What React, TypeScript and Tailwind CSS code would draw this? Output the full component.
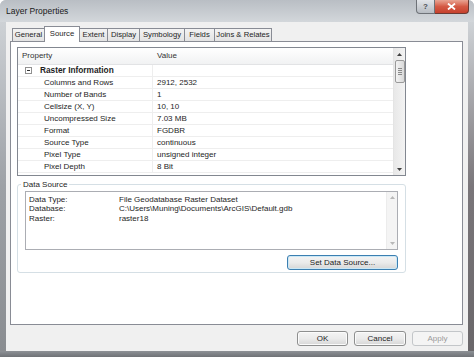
import React from "react"

const rows: [string, string][] = [
  ["Columns and Rows", "2912, 2532"],
  ["Number of Bands", "1"],
  ["Cellsize (X, Y)", "10, 10"],
  ["Uncompressed Size", "7.03 MB"],
  ["Format", "FGDBR"],
  ["Source Type", "continuous"],
  ["Pixel Type", "unsigned integer"],
  ["Pixel Depth", "8 Bit"],
]

const tabs = [
  { label: "General", w: "w-[33px]" },
  { label: "Source", w: "w-[36px]", active: true },
  { label: "Extent", w: "w-[29px]" },
  { label: "Display", w: "w-[33px]" },
  { label: "Symbology", w: "w-[46px]" },
  { label: "Fields", w: "w-[31px]" },
  { label: "Joins & Relates", w: "w-[58px]" },
]

function Arrow({ up, disabled }: { up?: boolean; disabled?: boolean }) {
  return (
    <svg width="5" height="3" viewBox="0 0 5 3">
      <path d={up ? "M0 3 L2.5 0 L5 3 Z" : "M0 0 L2.5 3 L5 0 Z"} fill={disabled ? "#b8b8b8" : "#404040"} />
    </svg>
  )
}

function WinButton({ label, w, focused, disabled }: { label: string; w: string; focused?: boolean; disabled?: boolean }) {
  const base = "h-[15px] rounded-[3px] border flex items-center justify-center text-[8px]"
  if (disabled) {
    return <div className={`${base} ${w} border-[#c3c6c9] bg-[#f4f4f4] text-[#9a9a9a]`}>{label}</div>
  }
  return (
    <div
      className={`${base} ${w} ${
        focused ? "border-[#3c7fb1] shadow-[inset_0_0_0_1px_#cbe8f6]" : "border-[#8e8f8f] shadow-[inset_0_0_0_1px_#fbfbfb]"
      } bg-gradient-to-b from-[#f4f4f4] via-[#ebebeb] to-[#d6d6d6] text-[#1e1e1e]`}
    >
      {label}
    </div>
  )
}

export default function App() {
  return (
    <div className="w-[474px] h-[357px] overflow-hidden flex flex-col bg-gradient-to-b from-[#c3c8cd] via-[#b3b8bd] to-[#8f9398] font-['Liberation_Sans',Arial,sans-serif] text-[#1e1e1e] rounded-t-[6px]">
      {/* Title bar */}
      <div className="h-[22px] flex items-start bg-gradient-to-b from-[#b9bec4] to-[#d3d7db]">
        <div className="pl-[6px] pt-[5px] text-[8.5px] text-[#1a1a1a]">Layer Properties</div>
        <div className="ml-auto mr-[5px] flex">
          <div className="w-[19px] h-[14px] rounded-bl-[4px] border border-t-0 border-[#6e7278] bg-gradient-to-b from-[#e2e5e9] to-[#b7bcc2] flex items-center justify-center text-[8px] text-[#4a4f55] font-bold">
            ?
          </div>
          <div className="w-[34px] h-[14px] rounded-br-[4px] border border-t-0 border-l-0 border-[#6b3a33] bg-gradient-to-b from-[#e8a493] via-[#d45a45] to-[#c6402c] flex items-center justify-center">
            <svg width="9" height="7" viewBox="0 0 9 7">
              <path d="M1 0.5 L8 6.5 M8 0.5 L1 6.5" stroke="#ffffff" strokeWidth="1.8" />
            </svg>
          </div>
        </div>
      </div>

      <div className="flex h-[329px]">
        <div className="w-[6px] bg-gradient-to-b from-[#cdd1d5] via-[#9da1a6] to-[#8a8d91]" />
        {/* Client area */}
        <div className="w-[462px] bg-[#f0f0f0] flex flex-col pt-[4px] pl-[4px] pr-[5px]">
          {/* Tabs */}
          <div className="h-[15px] flex items-end pl-[2px]">
            {tabs.map((t) =>
              t.active ? (
                <div
                  key={t.label}
                  className={`${t.w} h-[16px] -mb-px -ml-px relative z-10 bg-white border border-b-0 border-[#898c95] flex items-center justify-center text-[7.7px] pb-[1px]`}
                >
                  {t.label}
                </div>
              ) : (
                <div
                  key={t.label}
                  className={`${t.w} h-[13px] -ml-px first:ml-0 border border-b-0 border-[#898c95] bg-gradient-to-b from-[#f3f3f3] to-[#e3e3e3] flex items-center justify-center text-[7.7px]`}
                >
                  {t.label}
                </div>
              )
            )}
          </div>

          {/* Tab panel */}
          <div className="w-[453px] h-[284px] border border-[#898c95] bg-white flex flex-col pl-[6px] pt-[5px]">
            {/* Property grid */}
            <div className="w-[389px] h-[129px] border border-[#828790] flex overflow-hidden">
              <div className="flex-1 flex flex-col">
                <div className="h-[17px] flex items-center border-b border-[#e2e3e5] bg-gradient-to-b from-[#ffffff] to-[#f1f2f3] text-[8px] text-[#333]">
                  <div className="w-[135px] pl-[4px]">Property</div>
                  <div className="pl-[4px]">Value</div>
                </div>
                <div className="h-[12px] flex items-center border-b border-[#eeeeee]">
                  <div className="w-[135px] h-full flex items-center pl-[7px] border-r border-[#eeeeee]">
                    <div className="w-[7px] h-[7px] border border-[#919191] flex items-center justify-center">
                      <div className="w-[3px] h-px bg-[#333]" />
                    </div>
                    <span className="ml-[8px] text-[8.3px] font-bold">Raster Information</span>
                  </div>
                </div>
                {rows.map(([k, v]) => (
                  <div key={k} className="h-[12px] flex items-center border-b border-[#eeeeee] text-[8px]">
                    <div className="w-[135px] h-full flex items-center pl-[26px] border-r border-[#eeeeee]">{k}</div>
                    <div className="pl-[4px]">{v}</div>
                  </div>
                ))}
              </div>
              {/* Scrollbar */}
              <div className="w-[12px] bg-gradient-to-r from-[#e8e8e8] to-[#f3f3f3] border-l border-[#e4e4e4] flex flex-col items-center">
                <div className="h-[12px] flex items-center justify-center">
                  <Arrow up />
                </div>
                <div className="w-[10px] h-[23px] rounded-[2px] border border-[#9a9a9a] bg-gradient-to-r from-[#f3f3f3] to-[#d9d9d9] flex flex-col items-center justify-center gap-px">
                  <div className="w-[4px] h-px bg-[#8a8a8a]" />
                  <div className="w-[4px] h-px bg-[#8a8a8a]" />
                  <div className="w-[4px] h-px bg-[#8a8a8a]" />
                  <div className="w-[4px] h-px bg-[#8a8a8a]" />
                </div>
                <div className="mt-auto h-[11px] flex items-center justify-center">
                  <Arrow />
                </div>
              </div>
            </div>

            {/* Data Source group */}
            <div className="relative mt-[8px] w-[389px] h-[89px] border border-[#d5dfe5] rounded-[3px] flex flex-col items-stretch pt-[6px] px-[7px]">
              <div className="absolute -top-[6px] left-[3px] bg-white px-[2px] text-[8px]">Data Source</div>
              <div className="h-[59px] border border-[#abadb3] flex">
                <div className="flex-1 pl-[3px] pt-[3px] text-[8px] leading-[9.3px]">
                  <div className="flex">
                    <span className="w-[90px]">Data Type:</span>
                    <span>File Geodatabase Raster Dataset</span>
                  </div>
                  <div className="flex">
                    <span className="w-[90px]">Database:</span>
                    <span>C:\Users\Muning\Documents\ArcGIS\Default.gdb</span>
                  </div>
                  <div className="flex">
                    <span className="w-[90px]">Raster:</span>
                    <span>raster18</span>
                  </div>
                </div>
                <div className="w-[11px] bg-[#f4f4f4] border-l border-[#ececec] flex flex-col items-center">
                  <div className="h-[11px] flex items-center justify-center">
                    <Arrow up disabled />
                  </div>
                  <div className="mt-auto h-[11px] flex items-center justify-center">
                    <Arrow disabled />
                  </div>
                </div>
              </div>
              <div className="mt-[5px] flex justify-end">
                <WinButton label="Set Data Source..." w="w-[111px]" focused />
              </div>
            </div>
          </div>

          {/* Dialog buttons */}
          <div className="mt-[6px] flex justify-end gap-[6px]">
            <WinButton label="OK" w="w-[51px]" />
            <WinButton label="Cancel" w="w-[52px]" />
            <WinButton label="Apply" w="w-[51px]" disabled />
          </div>
        </div>
        <div className="w-[6px] bg-gradient-to-b from-[#cfd3d7] via-[#7a767a] to-[#6a676a]" />
      </div>
      <div className="h-[6px] bg-gradient-to-b from-[#8d9196] to-[#6f7276]" />
    </div>
  )
}
